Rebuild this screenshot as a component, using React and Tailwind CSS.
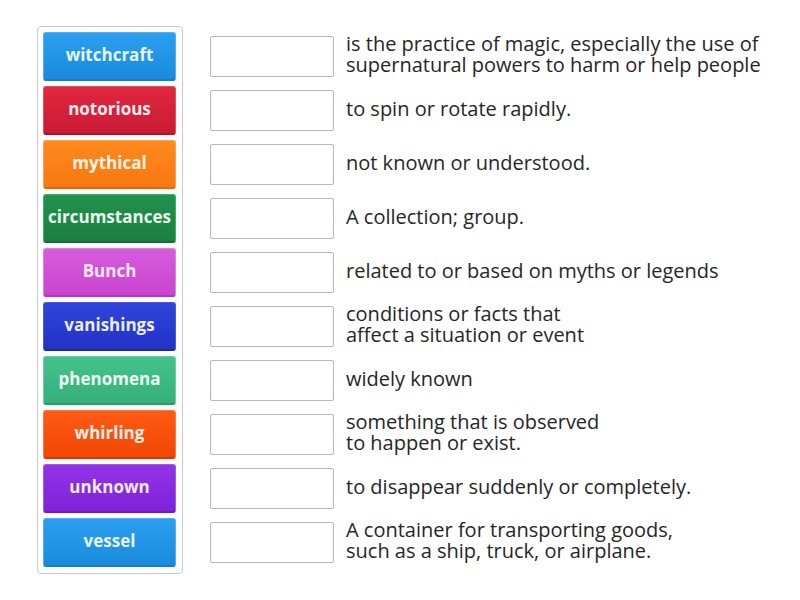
const tiles = [
  { word: "witchcraft", bg: "bg-[linear-gradient(#2b9ff0,#1a8bdc)]", edge: "border-[#4fb2f5] border-b-[#147ccc]", text: "text-[#e8f6ff]" },
  { word: "notorious", bg: "bg-[linear-gradient(#e0283f,#c91b33)]", edge: "border-[#e84f62] border-b-[#ad1428]", text: "text-[#fdecef]" },
  { word: "mythical", bg: "bg-[linear-gradient(#ff8a1f,#f77810)]", edge: "border-[#ffa04a] border-b-[#e06a08]", text: "text-[#fff4e6]" },
  { word: "circumstances", bg: "bg-[linear-gradient(#22924d,#1c7f41)]", edge: "border-[#2fbd63] border-b-[#176f38]", text: "text-[#e9fbef]" },
  { word: "Bunch", bg: "bg-[linear-gradient(#d65ddb,#c944cf)]", edge: "border-[#e07fe4] border-b-[#b635bd]", text: "text-[#fde9fe]" },
  { word: "vanishings", bg: "bg-[linear-gradient(#2f44da,#2233c6)]", edge: "border-[#4a5ce2] border-b-[#1b2aa8]", text: "text-[#eaeeff]" },
  { word: "phenomena", bg: "bg-[linear-gradient(#45c28c,#36b07a)]", edge: "border-[#66d3a2] border-b-[#2e9a6a]", text: "text-[#eefcf5]" },
  { word: "whirling", bg: "bg-[linear-gradient(#ff5a14,#f24705)]", edge: "border-[#ff7a42] border-b-[#d33c02]", text: "text-[#fff0e8]" },
  { word: "unknown", bg: "bg-[linear-gradient(#9233e6,#7f22d9)]", edge: "border-[#a659ec] border-b-[#6d19bf]", text: "text-[#f4ebff]" },
  { word: "vessel", bg: "bg-[linear-gradient(#2b9ff0,#1a8bdc)]", edge: "border-[#4fb2f5] border-b-[#147ccc]", text: "text-[#e8f6ff]" },
];

const definitions = [
  ["is the practice of magic, especially the use of", "supernatural powers to harm or help people"],
  ["to spin or rotate rapidly."],
  ["not known or understood."],
  ["A collection; group."],
  ["related to or based on myths or legends"],
  ["conditions or facts that", "affect a situation or event"],
  ["widely known"],
  ["something that is observed", "to happen or exist."],
  ["to disappear suddenly or completely."],
  ["A container for transporting goods,", "such as a ship, truck, or airplane."],
];

const Tile = ({ tile }) => (
  <div
    className={`h-[49px] w-[133px] flex items-center justify-center pb-[4px] rounded-[3px] border border-b-2 ${tile.bg} ${tile.edge}`}
  >
    <span className={`text-[17px] font-bold leading-none ${tile.text}`}>
      {tile.word}
    </span>
  </div>
);

export default function App() {
  return (
    <div
      className="w-[800px] h-[600px] bg-white flex items-start pl-[37px] pt-[26px]"
      style={{ fontFamily: '"Open Sans", "Liberation Sans", sans-serif' }}
    >
      <div className="w-[146px] border border-[#c8c8c8] rounded-[4px] pt-[5px] pb-[6px] pl-[5px] flex flex-col gap-[5px]">
        {tiles.map((tile) => (
          <Tile key={tile.word} tile={tile} />
        ))}
      </div>
      <div className="ml-[27px] pt-[6px] flex flex-col gap-[5px]">
        {definitions.map((lines, i) => (
          <div key={i} className="h-[49px] flex items-center">
            <div className="w-[124px] h-[41px] border border-[#b8b8b8] rounded-[2px] bg-white" />
            <p className="ml-[12px] -mt-[5px] text-[20px] leading-[21px] text-[#262626]">
              {lines.map((line, j) => (
                <span key={j} className="block whitespace-nowrap">
                  {line}
                </span>
              ))}
            </p>
          </div>
        ))}
      </div>
    </div>
  );
}
